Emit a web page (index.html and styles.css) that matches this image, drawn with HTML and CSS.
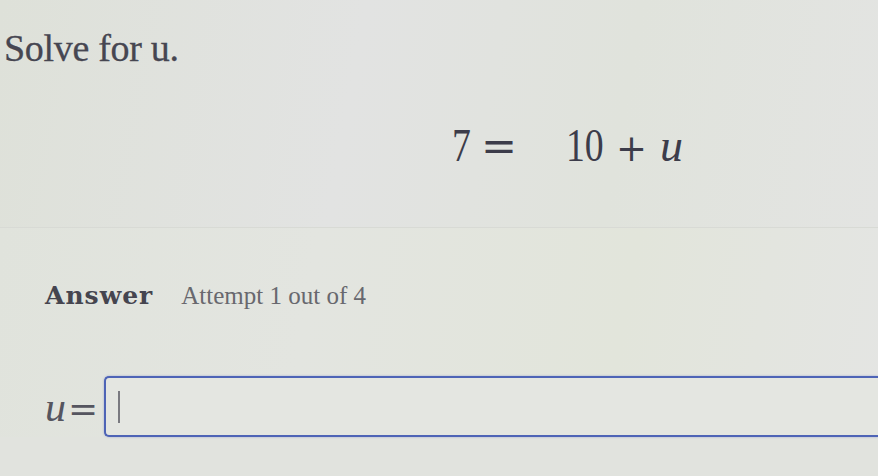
FILE: index.html
```html
<!DOCTYPE html>
<html>
<head>
<meta charset="utf-8">
<link rel="stylesheet" href="styles.css">
</head>
<body>
<div class="page">
  <section class="question">
    <h1 class="title">Solve for u.</h1>
    <div class="equation">
      <span class="num seven"><span class="glyph">7</span></span>
      <span class="rel">=</span>
      <span class="num ten"><span class="glyph">10</span></span>
      <span class="op">+</span>
      <span class="var">u</span>
    </div>
  </section>
  <section class="answer">
    <div class="answer-head">
      <span class="answer-label">Answer</span>
      <span class="attempt">Attempt 1 out of 4</span>
    </div>
    <div class="answer-row">
      <span class="lhs"><span class="var">u</span><span class="rel-small">=</span></span>
      <div class="input-box"><span class="caret"></span></div>
    </div>
  </section>
</div>
</body>
</html>
```

FILE: styles.css
```css
html, body {
  margin: 0;
  padding: 0;
}
body {
  width: 878px;
  height: 476px;
  overflow: hidden;
  background: #e1e3de;
  font-family: "Liberation Serif", "Times New Roman", serif;
}
.page {
  display: flex;
  flex-direction: column;
}
.question {
  height: 227px;
  background: linear-gradient(100deg, #dee1d9 0%, #e2e3e2 40%, #e0e3dc 70%, #e3e4e2 100%);
  border-bottom: 1px solid #d8dad5;
}
.title {
  margin: 0;
  padding: 24px 0 0 4px;
  font-size: 38px;
  font-weight: normal;
  line-height: 48px;
  color: #464651;
  letter-spacing: -0.3px;
  -webkit-text-stroke: 0.3px #464651;
}
.equation {
  display: flex;
  align-items: baseline;
  margin: 49px 0 0 452px;
  font-size: 46px;
  line-height: 50px;
  color: #3c3c4a;
}
.equation .num {
  display: inline-block;
  overflow: visible;
  white-space: nowrap;
}
.equation .glyph {
  display: inline-block;
  transform: scaleX(0.82);
  transform-origin: left;
}
.equation .seven {
  width: 19px;
}
.equation .ten {
  width: 37px;
}
.equation .rel {
  font-family: "DejaVu Serif", serif;
  font-size: 43px;
  width: 37px;
  margin-left: 10px;
  margin-right: 48px;
}
.equation .op {
  font-family: "DejaVu Serif", serif;
  font-size: 37px;
  width: 31px;
  margin-left: 13px;
  margin-right: 13px;
}
.var {
  font-style: italic;
}
.answer {
  background: linear-gradient(100deg, #e0e3dc 0%, #e3e5e0 35%, #e2e5db 70%, #e4e5e3 100%);
  flex: 1;
  height: 248px;
}
.answer-head {
  display: flex;
  align-items: baseline;
  gap: 28px;
  padding: 53px 0 0 45px;
  line-height: 30px;
}
.answer-label {
  font-family: "DejaVu Serif", serif;
  font-weight: bold;
  font-size: 25px;
  color: #45454f;
  letter-spacing: 1px;
}
.attempt {
  font-size: 25px;
  color: #68686e;
}
.answer-row {
  display: flex;
  align-items: center;
  margin-top: 65px;
  padding-left: 45px;
}
.lhs {
  display: flex;
  align-items: baseline;
  flex: none;
  width: 59px;
  color: #55555f;
}
.lhs .var {
  font-size: 42px;
}
.rel-small {
  margin-left: 2px;
  font-family: "DejaVu Serif", serif;
  font-size: 36px;
}
.input-box {
  flex: 1;
  height: 61px;
  border: 2.5px solid #4e64b6;
  border-right: none;
  border-radius: 5px 0 0 5px;
  box-shadow: 0 0 2px rgba(80, 100, 200, 0.5);
  background: #e4e6e1;
  display: flex;
  align-items: center;
  padding-left: 12px;
  box-sizing: border-box;
}
.caret {
  width: 2px;
  height: 32px;
  background: #7a7a80;
}
```
